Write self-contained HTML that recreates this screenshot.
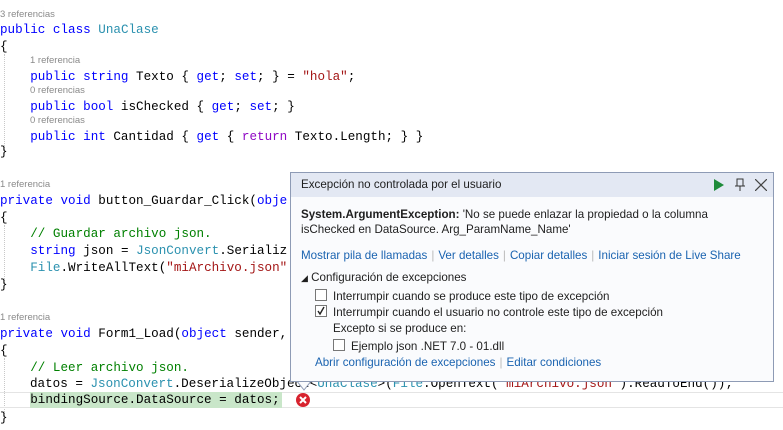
<!DOCTYPE html><html><head><style>
body{margin:0;width:783px;height:430px;background:#fff;position:relative;overflow:hidden;font-family:"Liberation Mono",monospace;}
.l{position:absolute;left:0;font-size:12.6px;white-space:pre;color:#000;line-height:16px;margin-top:1px}
.r{position:absolute;font-family:"Liberation Sans",sans-serif;font-size:9.5px;color:#8a8a8a;white-space:pre;line-height:12px;}
.k{color:#0000ff}.t{color:#2b91af}.s{color:#a31515}.c{color:#008000}.p{color:#8f08c4}
.g{position:absolute;left:4px;border-left:1px dotted #c8c8c8;}
#dlg{position:absolute;left:290px;top:172px;width:482px;height:208px;border:1px solid #8e9bb5;background:#fafbfd;font-family:"Liberation Sans",sans-serif;font-size:11.6px;color:#1e1e1e;}
#hd{height:24px;background:#e3e8f3;line-height:24px;padding-left:10px;position:relative;}
.a{color:#1a63b0}.sep{color:#b9b9b9;margin:0 4px}
.cb{display:inline-block;width:10px;height:10px;border:1px solid #777;background:#fff;vertical-align:-1px;margin-right:6px;position:relative}
#dlg div.x{position:absolute;white-space:nowrap}
</style></head><body>
<div class="g" style="top:54px;height:96px"></div>
<div class="g" style="top:225px;height:58px"></div>
<div class="g" style="top:358px;height:58px"></div>
<div class="r" style="left:0;top:9px">3 referencias</div>
<div class="l" style="top:21px"><span class="k">public class</span> <span class="t">UnaClase</span></div>
<div class="l" style="top:38px">{</div>
<div class="r" style="left:30px;top:55px">1 referencia</div>
<div class="l" style="top:68px">    <span class="k">public string</span> Texto { <span class="k">get</span>; <span class="k">set</span>; } = <span class="s">"hola"</span>;</div>
<div class="r" style="left:30px;top:85px">0 referencias</div>
<div class="l" style="top:98px">    <span class="k">public bool</span> isChecked { <span class="k">get</span>; <span class="k">set</span>; }</div>
<div class="r" style="left:30px;top:115px">0 referencias</div>
<div class="l" style="top:128px">    <span class="k">public int</span> Cantidad { <span class="k">get</span> { <span class="p">return</span> Texto.Length; } }</div>
<div class="l" style="top:143px">}</div>
<div class="r" style="left:0;top:179px">1 referencia</div>
<div class="l" style="top:192px"><span class="k">private void</span> button_Guardar_Click(<span class="k">obje</span></div>
<div class="l" style="top:209px">{</div>
<div class="l" style="top:225px">    <span class="c">// Guardar archivo json.</span></div>
<div class="l" style="top:242px">    <span class="k">string</span> json = <span class="t">JsonConvert</span>.Serializ</div>
<div class="l" style="top:259px">    <span class="t">File</span>.WriteAllText(<span class="s">"miArchivo.json"</span></div>
<div class="l" style="top:276px">}</div>
<div class="r" style="left:0;top:312px">1 referencia</div>
<div class="l" style="top:325px"><span class="k">private void</span> Form1_Load(<span class="k">object</span> sender,</div>
<div class="l" style="top:342px">{</div>
<div class="l" style="top:359px">    <span class="c">// Leer archivo json.</span></div>
<div class="l" style="top:375px;border-bottom:1px dotted #5a9a5a;left:30px;padding:0">datos = <span class="t">JsonConvert</span>.DeserializeObject&lt;<span class="t">UnaClase</span>&gt;(<span class="t">File</span>.OpenText(<span class="s">"miArchivo.json"</span>).ReadToEnd());</div>
<div style="position:absolute;left:0;top:392px;width:783px;height:16px;border-top:1px solid #e4e4e4;border-bottom:1px solid #e4e4e4;box-sizing:border-box"></div>
<div style="position:absolute;left:30px;top:392px;width:252px;height:16px;background:#c9e6c9"></div>
<div class="l" style="top:391px">    bindingSource.DataSource = datos;</div>
<div class="l" style="top:409px">}</div>
<svg style="position:absolute;left:295px;top:392px" width="16" height="16"><circle cx="8" cy="8" r="7" fill="#d7232e"/><path d="M5 5L11 11M11 5L5 11" stroke="#fff" stroke-width="2"/></svg>
<svg style="position:absolute;left:296px;top:379px" width="20" height="12"><path d="M0 1L8 11L16 1" fill="#fafbfd" stroke="#8e9bb5"/><rect x="1" y="0" width="14" height="2" fill="#fafbfd"/></svg>
<div id="dlg">
<div id="hd">Excepción no controlada por el usuario
<svg style="position:absolute;left:422px;top:6px" width="12" height="12"><path d="M1 0L11 6L1 12Z" fill="#1e8b3a"/></svg>
<svg style="position:absolute;left:444px;top:5px" width="10" height="14"><path d="M2 1H8V8H2ZM0 8H10M5 8V13" stroke="#333" fill="none"/></svg>
<svg style="position:absolute;left:464px;top:6px" width="12" height="12"><path d="M0 0L12 12M12 0L0 12" stroke="#444" stroke-width="1.2"/></svg>
</div>
<div class="x" style="left:10px;top:34px;line-height:15px"><b>System.ArgumentException:</b> 'No se puede enlazar la propiedad o la columna<br>isChecked en DataSource. Arg_ParamName_Name'</div>
<div class="x a" style="left:10px;top:76px">Mostrar pila de llamadas<span class="sep">|</span>Ver detalles<span class="sep">|</span>Copiar detalles<span class="sep">|</span>Iniciar sesión de Live Share</div>
<div class="x" style="left:10px;top:98px"><span style="font-size:9px">◢</span> Configuración de excepciones</div>
<div class="x" style="left:24px;top:116px"><span class="cb"></span>Interrumpir cuando se produce este tipo de excepción</div>
<div class="x" style="left:24px;top:132px"><span class="cb"><svg style="position:absolute;left:0;top:0" width="10" height="10"><path d="M2 5L4 8L8 1" stroke="#222" stroke-width="1.4" fill="none"/></svg></span>Interrumpir cuando el usuario no controle este tipo de excepción</div>
<div class="x" style="left:42px;top:149px">Excepto si se produce en:</div>
<div class="x" style="left:42px;top:166px"><span class="cb"></span>Ejemplo json .NET 7.0 - 01.dll</div>
<div class="x a" style="left:24px;top:183px">Abrir configuración de excepciones<span class="sep">|</span>Editar condiciones</div>
</div>
</body></html>
